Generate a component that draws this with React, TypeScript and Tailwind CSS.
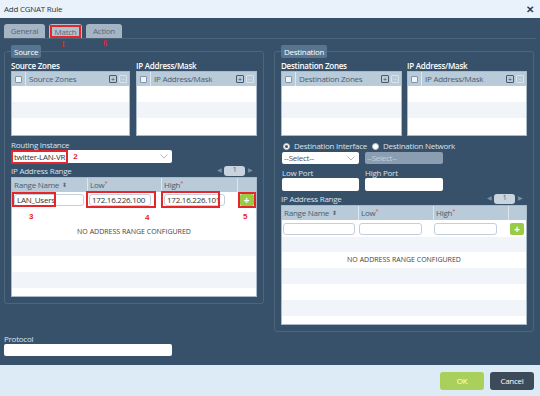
import React from 'react';

const font = { fontFamily: '"Open Sans", "Liberation Sans", sans-serif' };

const Check = () => <span className="w-[7px] h-[7px] bg-[#eef3f7] border border-[#8195a8] rounded-[1px] shrink-0"></span>;

const PlusMinus = () => (
  <div className="flex gap-[2px] ml-auto">
    <span className="w-[8px] h-[8px] border border-[#4a5a6a] rounded-[1px] flex items-center justify-center text-[7px] leading-none text-[#3a4a5a]">+</span>
    <span className="w-[8px] h-[8px] border border-[#dbe3ea] rounded-[1px] flex items-center justify-center text-[7px] leading-none text-[#dbe3ea]">−</span>
  </div>
);

const ListBox = ({ title, label, w }: { title: string; label: string; w: string }) => (
  <div className={`flex flex-col ${w}`}>
    <div className="h-[11px] text-[8px] leading-[11px] font-semibold text-white">{title}</div>
    <div className="bg-white border border-[#a9bacb]">
      <div className="h-[14px] bg-[#b9cad9] flex items-center pl-[3px] pr-[2px] gap-[3px]">
        <Check />
        <span className="h-full border-l border-[#dfe7ee]"></span>
        <span className="text-[8px] text-[#4d5d6d]">{label}</span>
        <PlusMinus />
      </div>
      <div className="h-[16px] bg-white"></div>
      <div className="h-[16px] bg-[#f1f5f9]"></div>
      <div className="h-[17px] bg-white"></div>
    </div>
  </div>
);

const Pager = () => (
  <div className="flex items-center gap-[3px] text-[6px] text-[#7b8fa2]">
    <span>◀</span>
    <span className="w-[21px] h-[10px] rounded-[3px] bg-[#c8d4df] text-[7px] text-[#4d5d6d] flex items-center justify-center">1</span>
    <span>▶</span>
  </div>
);

const Input = ({ className = '', value = '' }: { className?: string; value?: string }) => (
  <div className={`h-[12px] bg-white border border-[#c3cfda] rounded-[3px] text-[8px] leading-[10px] text-[#333] pl-[2px] overflow-hidden whitespace-nowrap ${className}`}>{value}</div>
);

const Chevron = () => (
  <svg className="ml-auto" width="8" height="5" viewBox="0 0 8 5"><path d="M0.5 0.5 L4 4 L7.5 0.5" fill="none" stroke="#9aa7b3" strokeWidth="0.8" /></svg>
);

const Select = ({ className = '', disabled = false }: { className?: string; disabled?: boolean }) => (
  <div className={`h-[12px] rounded-[2px] flex items-center pl-[2px] pr-[4px] text-[8px] ${disabled ? 'bg-[#8b9db0] text-[#c6d1db]' : 'bg-white text-[#555]'} ${className}`}>
    <span>--Select--</span>
    {!disabled && <Chevron />}
  </div>
);

const Red = ({ children, className = '' }: { children: React.ReactNode; className?: string }) => (
  <span className={`text-[#e5262a] font-bold text-[8px] leading-none ${className}`} style={{ fontFamily: '"Liberation Sans", sans-serif' }}>{children}</span>
);

const RangeHeader = ({ cols }: { cols: string }) => (
  <div className={`h-[14px] bg-[#b9cad9] grid ${cols} text-[8px] text-[#4d5d6d]`}>
    <div className="flex items-center pl-[2px] gap-[3px]">Range Name <span className="text-[6px] text-[#5a6a7a] leading-none">⬍</span></div>
    <div className="flex items-center pl-[2px] border-l border-[#dde6ee]">Low<span className="text-[#e5494d] text-[6px] -mt-[3px]">*</span></div>
    <div className="flex items-center pl-[2px] border-l border-[#dde6ee]">High<span className="text-[#e5494d] text-[6px] -mt-[3px]">*</span></div>
    <div className="border-l border-[#dde6ee]"></div>
  </div>
);

const GreenPlus = () => (
  <div className="w-[14px] h-[12px] rounded-[2px] bg-[#9acb44] text-white text-[10px] leading-[12px] text-center font-bold">+</div>
);

const Legend = ({ children }: { children: React.ReactNode }) => (
  <legend className="h-[13px] px-[3px] rounded-[2px] bg-[#587590] text-[8px] leading-[13px] text-white">{children}</legend>
);

export default function App() {
  return (
    <div className="w-[540px] h-[396px] flex flex-col overflow-hidden tracking-[-0.25px]" style={font}>
      <div className="h-[18px] bg-[#e9f2fb] flex items-center justify-between px-[4px]">
        <span className="text-[8px] text-[#333]">Add CGNAT Rule</span>
        <span className="text-[10px] font-bold text-[#2c3e50] leading-none pr-[2px]">✕</span>
      </div>

      <div className="flex-1 bg-[#38516a] flex flex-col px-[4px] pt-[6px] pb-[9px]">
        <div className="flex gap-[4px] items-end h-[15px] border-b border-[#4c6479]">
          <div className="h-[14px] w-[41px] rounded-t-[3px] bg-[#a6b5c3] text-[8px] text-[#56677a] flex items-center justify-center">General</div>
          <div className="h-[14px] w-[33px] rounded-t-[3px] bg-[#b3c2cf] text-[8px] text-[#56677a] flex items-center justify-center relative">
            <span className="border-2 border-[#e5262a] w-[31px] h-[13px] leading-[9px] text-center">Match</span>
            <span className="absolute left-[12px] top-[17px] text-[#e5262a] font-bold text-[8px] leading-none" style={{ fontFamily: '"Liberation Serif", serif' }}>1</span>
          </div>
          <div className="h-[14px] w-[36px] rounded-t-[3px] bg-[#a6b5c3] text-[8px] text-[#56677a] flex items-center justify-center relative">
            Action
            <span className="absolute left-[17px] top-[16px] text-[#e5262a] font-bold text-[8px] leading-none" style={{ fontFamily: '"Liberation Serif", serif' }}>6</span>
          </div>
        </div>

        <div className="flex gap-[10px] items-start mt-[6px]">
          {/* Source */}
          <fieldset className="w-[260px] border border-[#4d667c] rounded-[3px] px-[6px] pb-[6px]">
            <Legend>Source</Legend>
            <div className="flex gap-[6px] mt-[2px]">
              <ListBox title="Source Zones" label="Source Zones" w="w-[119px]" />
              <ListBox title="IP Address/Mask" label="IP Address/Mask" w="w-[121px]" />
            </div>
            <div className="h-[11px] mt-[3px] text-[8px] leading-[11px] text-[#d7e2ec]">Routing Instance</div>
            <div className="w-[161px] h-[13px] bg-white rounded-[2px] flex items-center pr-[4px]">
              <span className="border-2 border-[#e5262a] h-[14px] text-[8px] leading-[10px] text-[#333] px-[1px] whitespace-nowrap">twitter-LAN-VR</span>
              <Red className="ml-[5px]">2</Red>
              <Chevron />
            </div>
            <div className="h-[13px] mt-[1px] flex items-center justify-between text-[8px] text-[#d7e2ec]">
              <span>IP Address Range</span>
              <div className="pr-[4px]"><Pager /></div>
            </div>
            <div className="bg-white border border-[#a9bacb]">
              <RangeHeader cols="grid-cols-[75px_74px_76px_1fr]" />
              <div className="h-[16px] grid grid-cols-[75px_74px_76px_1fr] items-center text-[8px] leading-none">
                <div className="relative pl-[2px]">
                  <Input className="w-[70px]" value="LAN_Users" />
                  <span className="absolute left-0 -top-[2px] w-[44px] h-[15px] border-2 border-[#e5262a]"></span>
                </div>
                <div className="relative pl-[2px]">
                  <Input className="w-[62px]" value="172.16.226.100" />
                  <span className="absolute -left-[1px] -top-[3px] w-[70px] h-[17px] border-2 border-[#e5262a]"></span>
                </div>
                <div className="relative pl-[3px]">
                  <Input className="w-[61px]" value="172.16.226.101" />
                  <span className="absolute left-0 -top-[3px] w-[59px] h-[17px] border-2 border-[#e5262a]"></span>
                </div>
                <div className="flex justify-center">
                  <div className="border-2 border-[#e5262a]"><GreenPlus /></div>
                </div>
              </div>
              <div className="h-[16px] grid grid-cols-[75px_74px_76px_1fr] items-center text-[8px] leading-none">
                <div className="pl-[17px]"><Red>3</Red></div>
                <div className="pl-[58px] pt-[3px]"><Red>4</Red></div>
                <div></div>
                <div className="pl-[6px]"><Red>5</Red></div>
              </div>
              <div className="h-[16px] bg-white flex items-center justify-center text-[7px] tracking-normal text-[#444]">NO ADDRESS RANGE CONFIGURED</div>
              <div className="h-[16px] bg-[#f1f5f9]"></div>
              <div className="h-[16px] bg-white"></div>
              <div className="h-[16px] bg-[#f1f5f9]"></div>
              <div className="h-[8px] bg-white"></div>
            </div>
          </fieldset>

          {/* Destination */}
          <fieldset className="w-[260px] border border-[#4d667c] rounded-[3px] px-[6px] pb-[6px]">
            <Legend>Destination</Legend>
            <div className="flex gap-[5px] mt-[2px]">
              <ListBox title="Destination Zones" label="Destination Zones" w="w-[121px]" />
              <ListBox title="IP Address/Mask" label="IP Address/Mask" w="w-[120px]" />
            </div>
            <div className="h-[12px] mt-[4px] flex items-center text-[8px] text-[#d7e2ec]">
              <span className="w-[7px] h-[7px] rounded-full bg-white border border-[#b6c3cf] flex items-center justify-center ml-[2px]"><span className="w-[3px] h-[3px] rounded-full bg-[#4a5562]"></span></span>
              <span className="ml-[4px]">Destination Interface</span>
              <span className="w-[7px] h-[7px] rounded-full bg-white border border-[#b6c3cf] ml-[5px]"></span>
              <span className="ml-[4px]">Destination Network</span>
            </div>
            <div className="flex gap-[6px] pl-[1px]">
              <Select className="w-[77px]" />
              <Select className="w-[78px]" disabled />
            </div>
            <div className="flex gap-[6px] pl-[1px] mt-[3px]">
              <div className="w-[77px]">
                <div className="h-[11px] text-[8px] leading-[11px] text-[#d7e2ec]">Low Port</div>
                <div className="h-[13px] bg-white rounded-[2px]"></div>
              </div>
              <div className="w-[78px]">
                <div className="h-[11px] text-[8px] leading-[11px] text-[#d7e2ec]">High Port</div>
                <div className="h-[13px] bg-white rounded-[2px]"></div>
              </div>
            </div>
            <div className="h-[13px] mt-[1px] flex items-center justify-between text-[8px] text-[#d7e2ec]">
              <span>IP Address Range</span>
              <div className="pr-[4px]"><Pager /></div>
            </div>
            <div className="bg-white border border-[#a9bacb]">
              <RangeHeader cols="grid-cols-[76px_75px_75px_1fr]" />
              <div className="h-[17px] grid grid-cols-[76px_75px_75px_1fr] items-center">
                <div className="pl-[1px]"><Input className="w-[72px]" /></div>
                <div className="pl-[1px]"><Input className="w-[63px]" /></div>
                <div className="pl-[1px]"><Input className="w-[63px]" /></div>
                <div className="flex justify-center"><GreenPlus /></div>
              </div>
              <div className="h-[15px] bg-[#f1f5f9]"></div>
              <div className="h-[16px] bg-white flex items-center justify-center text-[7px] tracking-normal text-[#444]">NO ADDRESS RANGE CONFIGURED</div>
              <div className="h-[16px] bg-[#f1f5f9]"></div>
              <div className="h-[16px] bg-white"></div>
              <div className="h-[16px] bg-[#f1f5f9]"></div>
              <div className="h-[8px] bg-white"></div>
            </div>
          </fieldset>
        </div>

        <div className="mt-auto">
          <div className="h-[11px] text-[8px] leading-[11px] text-[#d7e2ec]">Protocol</div>
          <div className="w-[168px] h-[12px] bg-white rounded-[2px]"></div>
        </div>
      </div>

      <div className="h-[31px] bg-[#dcebf6] flex items-center justify-end gap-[6px] pr-[6px] pt-[1px]">
        <div className="w-[44px] h-[18px] rounded-[3px] bg-[#a8d05a] text-white text-[8px] flex items-center justify-center">OK</div>
        <div className="w-[44px] h-[18px] rounded-[3px] bg-[#3d4a5a] text-white text-[8px] flex items-center justify-center">Cancel</div>
      </div>
    </div>
  );
}
